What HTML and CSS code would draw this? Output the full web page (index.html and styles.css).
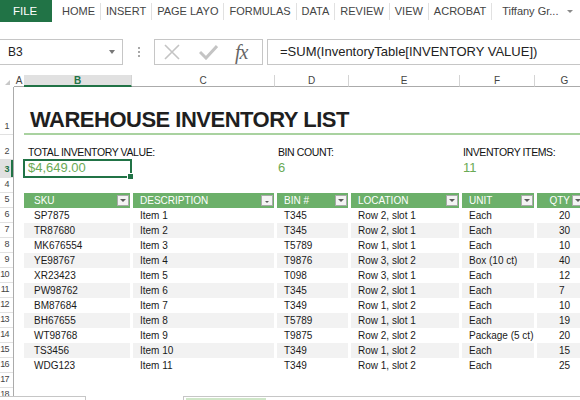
FILE: index.html
```html
<!DOCTYPE html>
<html lang="en">
  <head>
    <meta charset="UTF-8" />
    <meta name="viewport" content="width=device-width, initial-scale=1.0" />
    <title>Warehouse Inventory List</title>
    <link rel="stylesheet" href="styles.css">
  </head>
  <body>
    <div class="ribbon">
      <div class="file-tab">FILE</div>
      <div class="tab">HOME</div>
      <div class="tab">INSERT</div>
      <div class="tab">PAGE LAYO</div>
      <div class="tab">FORMULAS</div>
      <div class="tab">DATA</div>
      <div class="tab">REVIEW</div>
      <div class="tab">VIEW</div>
      <div class="tab">ACROBAT</div>
      <div class="tab account">Tiffany Gr... <span class="caret"></span></div>
      <div class="avatar"></div>
    </div>

    <div class="formula-bar">
      <div class="name-box">
        <span>B3</span>
        <span class="caret"></span>
      </div>
      <div class="grip"><i></i><i></i><i></i></div>
      <div class="fx-buttons">
        <svg class="btn-cancel" width="18" height="16" viewBox="0 0 18 16">
          <path d="M2 1 L16 15 M16 1 L2 15" stroke="#c4c4c4" stroke-width="1.6" fill="none" />
        </svg>
        <svg class="btn-enter" width="19" height="16" viewBox="0 0 19 16">
          <path d="M1 8 L7 14 L18 2" stroke="#c4c4c4" stroke-width="3" fill="none" />
        </svg>
        <span class="fx">fx</span>
      </div>
      <div class="formula">=SUM(InventoryTable[INVENTORY VALUE])</div>
    </div>

    <div class="col-heads">
      <div class="corner"><span class="corner-mark"></span></div>
      <div class="col-head col-a">A</div>
      <div class="col-head col-b active">B</div>
      <div class="col-head col-c">C</div>
      <div class="col-head col-d">D</div>
      <div class="col-head col-e">E</div>
      <div class="col-head col-f">F</div>
      <div class="col-head col-g">G</div>
    </div>

    <div class="sheet">
      <div class="row-heads">
        <div class="row-head title-row">1</div>
        <div class="row-head label-row">2</div>
        <div class="row-head value-row active">3</div>
        <div class="row-head">4</div>
        <div class="row-head">5</div>
        <div class="row-head">6</div>
        <div class="row-head">7</div>
        <div class="row-head">8</div>
        <div class="row-head">9</div>
        <div class="row-head">10</div>
        <div class="row-head">11</div>
        <div class="row-head">12</div>
        <div class="row-head">13</div>
        <div class="row-head">14</div>
        <div class="row-head">15</div>
        <div class="row-head">16</div>
        <div class="row-head">17</div>
        <div class="row-head">18</div>
      </div>

      <div class="cells">
        <div class="title-row">
          <h1 class="title">WAREHOUSE INVENTORY LIST</h1>
        </div>

        <div class="cols label-row">
          <div class="summary first">TOTAL INVENTORY VALUE:</div>
          <div class="summary">BIN COUNT:</div>
          <div class="summary">INVENTORY ITEMS:</div>
        </div>

        <div class="cols value-row">
          <div class="value first active">$4,649.00</div>
          <div class="value filler"></div>
          <div class="value">6</div>
          <div class="value filler"></div>
          <div class="value">11</div>
        </div>

        <div class="spacer-row"></div>

        <div class="inventory">
          <div class="line head">
            <span>SKU<i class="filter"></i></span>
            <span>DESCRIPTION<i class="filter sorted"></i></span>
            <span>BIN #<i class="filter"></i></span>
            <span>LOCATION<i class="filter"></i></span>
            <span>UNIT<i class="filter"></i></span>
            <span class="qty">QTY<i class="filter"></i></span>
          </div>
          <div class="line"><span>SP7875</span><span>Item 1</span><span>T345</span><span>Row 2, slot 1</span><span>Each</span><span class="qty">20</span></div>
          <div class="line"><span>TR87680</span><span>Item 2</span><span>T345</span><span>Row 2, slot 1</span><span>Each</span><span class="qty">30</span></div>
          <div class="line"><span>MK676554</span><span>Item 3</span><span>T5789</span><span>Row 1, slot 1</span><span>Each</span><span class="qty">10</span></div>
          <div class="line"><span>YE98767</span><span>Item 4</span><span>T9876</span><span>Row 3, slot 2</span><span>Box (10 ct)</span><span class="qty">40</span></div>
          <div class="line"><span>XR23423</span><span>Item 5</span><span>T098</span><span>Row 3, slot 1</span><span>Each</span><span class="qty">12</span></div>
          <div class="line"><span>PW98762</span><span>Item 6</span><span>T345</span><span>Row 2, slot 1</span><span>Each</span><span class="qty">7</span></div>
          <div class="line"><span>BM87684</span><span>Item 7</span><span>T349</span><span>Row 1, slot 2</span><span>Each</span><span class="qty">10</span></div>
          <div class="line"><span>BH67655</span><span>Item 8</span><span>T5789</span><span>Row 1, slot 1</span><span>Each</span><span class="qty">19</span></div>
          <div class="line"><span>WT98768</span><span>Item 9</span><span>T9875</span><span>Row 2, slot 2</span><span>Package (5 ct)</span><span class="qty">20</span></div>
          <div class="line"><span>TS3456</span><span>Item 10</span><span>T349</span><span>Row 1, slot 2</span><span>Each</span><span class="qty">15</span></div>
          <div class="line"><span>WDG123</span><span>Item 11</span><span>T349</span><span>Row 1, slot 2</span><span>Each</span><span class="qty">25</span></div>
        </div>
      </div>
    </div>

    <div class="sheet-tabs">
      <div class="tab-nav"></div>
      <div class="tab-gap"></div>
      <div class="hscroll"><div class="thumb"></div></div>
    </div>
  </body>
</html>
```

FILE: styles.css
```css
* {
  box-sizing: border-box;
}
body {
  margin: 0;
  width: 580px;
  height: 400px;
  overflow: hidden;
  background: #fff;
  font-family: "Liberation Sans", Arial, sans-serif;
  color: #222;
}

/* ribbon */
.ribbon {
  display: flex;
  align-items: center;
  height: 22px;
  overflow: hidden;
  font-size: 11px;
  color: #444;
  white-space: nowrap;
}
.ribbon > div {
  flex: none;
}
.file-tab {
  width: 52px;
  height: 22px;
  line-height: 22px;
  padding-left: 13px;
  background: #217346;
  color: #fff;
  font-size: 11.5px;
}
.tab {
  padding: 0 5px;
  line-height: 17px;
  border-left: 1px solid #e1e1e1;
}
.file-tab + .tab {
  border-left: none;
  margin-left: 5px;
}
.account {
  display: flex;
  align-items: center;
  padding-left: 10px;
  padding-right: 0;
}
.account .caret {
  margin-left: 9px;
  border-left: 3px solid transparent;
  border-right: 3px solid transparent;
  border-top: 3px solid #8a8a8a;
}
.avatar {
  width: 14px;
  height: 22px;
  margin-left: 8px;
  background: linear-gradient(180deg, #b9b2a6, #8f877c 60%, #c9c3ba);
}

/* formula bar */
.formula-bar {
  display: flex;
  height: 26px;
  margin-top: 17px;
}
.formula-bar > div {
  flex: none;
}
.name-box {
  width: 124px;
  margin-left: -1px;
  border: 1px solid #c6c6c6;
  display: flex;
  align-items: center;
  justify-content: space-between;
  padding: 0 7px 0 8px;
  font-size: 12px;
  color: #222;
}
.name-box .caret {
  border-left: 3px solid transparent;
  border-right: 3px solid transparent;
  border-top: 4px solid #777;
}
.grip {
  width: 31px;
  display: flex;
  flex-direction: column;
  align-items: center;
  justify-content: center;
  gap: 2px;
}
.grip i {
  width: 2px;
  height: 2px;
  background: #a8a8a8;
}
.fx-buttons {
  width: 109px;
  border: 1px solid #c6c6c6;
  display: flex;
  align-items: center;
  padding-left: 8px;
}
.btn-enter {
  margin-left: 18px;
}
.fx {
  margin-left: 17px;
  font-family: "Liberation Serif", serif;
  font-style: italic;
  font-size: 20px;
  color: #666;
  line-height: 20px;
  letter-spacing: -1px;
}
.formula-bar .formula {
  flex: 1;
  margin-left: 4px;
  margin-right: -1px;
  border: 1px solid #c6c6c6;
  padding-left: 12px;
  font-size: 13px;
  line-height: 24px;
  color: #222;
  white-space: nowrap;
}

/* column headers */
.col-heads {
  display: flex;
  height: 12px;
  margin-top: 10px;
  font-size: 10px;
  line-height: 11px;
  color: #444;
}
.corner {
  flex: none;
  width: 14px;
  position: relative;
}
.corner-mark {
  position: absolute;
  left: 5px;
  bottom: 2px;
  border-left: 5px solid transparent;
  border-bottom: 5px solid #c8c8c8;
}
.col-head {
  flex: none;
  text-align: center;
  border-right: 1px solid #d4d4d4;
  border-bottom: 1px solid #ababab;
}
.col-head.active {
  background: #e1e1e1;
  border-bottom: 2px solid #217346;
  color: #217346;
  font-weight: bold;
}
.col-a { width: 10px; border-right: none; }
.col-b { width: 108px; }
.col-c { width: 143px; }
.col-d { width: 74px; }
.col-e { width: 111px; }
.col-f { width: 75px; }
.col-g { width: 60px; }

/* sheet */
.sheet {
  display: flex;
  height: 309px;
  overflow: hidden;
}
.row-heads {
  flex: none;
  width: 14px;
  border-right: 1px solid #ababab;
  font-size: 9px;
  letter-spacing: -0.6px;
  color: #444;
}
.row-head {
  height: 15px;
  display: flex;
  align-items: flex-end;
  justify-content: flex-end;
  padding: 0 4px 2px 0;
  border-bottom: 1px solid #e1e1e1;
  line-height: 12px;
}
.row-head.active {
  background: #e1e1e1;
  color: #217346;
  font-weight: bold;
  box-shadow: inset -2px 0 0 #217346;
}
.title-row { height: 48px; }
.label-row { height: 25px; }
.value-row { height: 18px; }
.spacer-row { height: 15px; }

.cells {
  flex: none;
  width: 600px;
  padding-left: 10px;
}
.cols {
  display: grid;
  grid-template-columns: 108px 143px 74px 111px 75px 60px;
}
.cells .title-row {
  display: flex;
  align-items: flex-end;
  border-bottom: 2px solid #a9d2a0;
}
.title {
  margin: 0;
  padding-left: 6px;
  font-size: 22px;
  line-height: 26px;
  font-weight: bold;
  letter-spacing: -0.5px;
  color: #1f1f1f;
}
.summary {
  grid-column: span 2;
  align-self: end;
  padding: 0 0 1px 3px;
  font-size: 10.5px;
  line-height: 13px;
  letter-spacing: -0.4px;
  white-space: nowrap;
  color: #111;
}
.summary.first,
.value.first {
  padding-left: 4px;
}
.value {
  align-self: stretch;
  display: flex;
  align-items: flex-end;
  padding: 0 0 2px 3px;
  font-size: 13px;
  line-height: 16px;
  color: #6aaa55;
}
.value.active {
  position: relative;
}
.value.active::after {
  content: "";
  position: absolute;
  left: -1px;
  top: -1px;
  right: 0;
  bottom: 0;
  border: 2px solid #217346;
}
.value.active::before {
  content: "";
  position: absolute;
  right: -2px;
  bottom: -2px;
  width: 5px;
  height: 5px;
  background: #217346;
  border: 1px solid #fff;
  z-index: 1;
}

/* inventory table */
.line {
  display: grid;
  grid-template-columns: 106px 141px 71px 108px 72px 46px;
  column-gap: 3px;
  height: 15px;
}
.line span {
  position: relative;
  padding-left: 7px;
  font-size: 10px;
  line-height: 15px;
  white-space: nowrap;
  color: #1a1a1a;
}
.line span:first-child {
  padding-left: 10px;
}
.line span.qty {
  padding-left: 22px;
}
.line:nth-child(odd) span {
  background: #f2f2f2;
}
.line.head span {
  background: #6cb06a;
  color: #fff;
}
.line.head span.qty {
  padding-left: 0;
  padding-right: 13px;
  text-align: right;
}
.filter {
  position: absolute;
  right: 1px;
  top: 2px;
  width: 12px;
  height: 11px;
  background: #f4f4f4;
  border: 1px solid #a9a9a9;
}
.filter::after {
  content: "";
  position: absolute;
  left: 2px;
  top: 3px;
  border-left: 3px solid transparent;
  border-right: 3px solid transparent;
  border-top: 3px solid #5a5a5a;
}
.filter.sorted::after {
  left: 3px;
  top: 5px;
  border-left-width: 2px;
  border-right-width: 2px;
  border-top-width: 2px;
}
.line.head .qty .filter {
  right: -1px;
}

/* sheet tabs / scroll bar */
.sheet-tabs {
  display: flex;
  height: 20px;
}
.tab-nav {
  width: 86px;
  border-top: 1px solid #c6c6c6;
  border-right: 1px solid #c6c6c6;
}
.tab-gap {
  width: 97px;
}
.hscroll {
  flex: 1;
  border-top: 1px solid #c6c6c6;
  border-left: 1px solid #c6c6c6;
  padding: 1px 2px;
}
.thumb {
  width: 80px;
  height: 12px;
  background: #cfe6c8;
}
```
